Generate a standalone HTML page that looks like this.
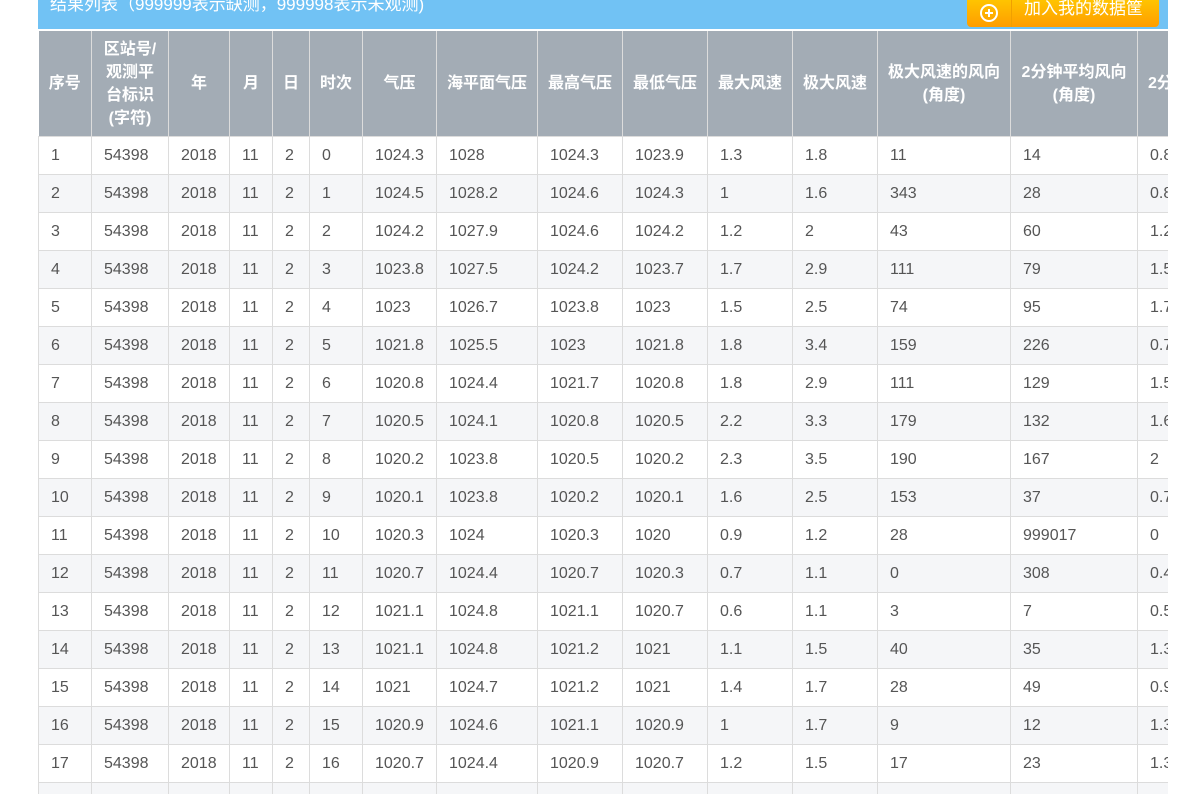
<!DOCTYPE html>
<html><head><meta charset="utf-8"><style>
body{margin:0;background:#fff;font-family:"Liberation Sans","Noto Sans CJK SC",sans-serif;}
.bar{position:absolute;left:38px;top:0;width:1130px;height:29px;background:#71c2f4;}
.bar .t{position:absolute;left:12px;top:-5px;color:#fff;font-size:17px;line-height:20px;}
.btn{position:absolute;left:929px;top:0;width:192px;height:27px;border-radius:0 0 4px 4px;background:linear-gradient(#ffc400,#ff9d00);}
.btn .ic{position:absolute;left:13px;top:4px;width:14px;height:14px;border:2px solid #fff;border-radius:50%;}
.btn .ic:before{content:"";position:absolute;left:3px;top:6px;width:8px;height:2px;background:#fff;}
.btn .ic:after{content:"";position:absolute;left:6px;top:3px;width:2px;height:8px;background:#fff;}
.btn .d{position:absolute;left:44px;top:0;width:1px;height:27px;background:#f0a000;}
.btn .l{position:absolute;left:57px;top:-2px;color:#fff;font-size:17px;line-height:22px;}
.wrap{position:absolute;left:38px;top:31px;width:1130px;height:763px;overflow:hidden;}
table{border-collapse:collapse;table-layout:fixed;width:1200px;}
th{background:#a3acb5;color:#fff;font-weight:bold;font-size:16px;line-height:23px;height:105px;border:1px solid #dcdcdc;border-top:0;padding:0 2px;text-align:center;white-space:nowrap;}
td{height:36px;border:1px solid #dcdcdc;color:#555;font-size:16px;padding:1px 0 0 12px;white-space:nowrap;box-sizing:content-box;}
tr:nth-child(even) td{background:#f5f6f8;}
</style></head><body>
<div class="bar"><div class="t">结果列表（999999表示缺测，999998表示未观测)</div>
<div class="btn"><div class="ic"></div><div class="d"></div><div class="l">加入我的数据筐</div></div></div>
<div class="wrap"><table>
<colgroup><col style="width:53px"><col style="width:77px"><col style="width:61px"><col style="width:43px"><col style="width:37px"><col style="width:53px"><col style="width:74px"><col style="width:101px"><col style="width:85px"><col style="width:85px"><col style="width:85px"><col style="width:85px"><col style="width:133px"><col style="width:127px"><col style="width:101px"></colgroup>
<thead><tr><th style="border-left:0">序号</th><th>区站号/<br>观测平<br>台标识<br>(字符)</th><th>年</th><th>月</th><th>日</th><th>时次</th><th>气压</th><th>海平面气压</th><th>最高气压</th><th>最低气压</th><th>最大风速</th><th>极大风速</th><th>极大风速的风向<br>(角度)</th><th>2分钟平均风向<br>(角度)</th><th style="text-align:left;padding-left:10px">2分钟平均风速</th></tr></thead>
<tbody>
<tr><td>1</td><td>54398</td><td>2018</td><td>11</td><td>2</td><td>0</td><td>1024.3</td><td>1028</td><td>1024.3</td><td>1023.9</td><td>1.3</td><td>1.8</td><td>11</td><td>14</td><td>0.8</td></tr>
<tr><td>2</td><td>54398</td><td>2018</td><td>11</td><td>2</td><td>1</td><td>1024.5</td><td>1028.2</td><td>1024.6</td><td>1024.3</td><td>1</td><td>1.6</td><td>343</td><td>28</td><td>0.8</td></tr>
<tr><td>3</td><td>54398</td><td>2018</td><td>11</td><td>2</td><td>2</td><td>1024.2</td><td>1027.9</td><td>1024.6</td><td>1024.2</td><td>1.2</td><td>2</td><td>43</td><td>60</td><td>1.2</td></tr>
<tr><td>4</td><td>54398</td><td>2018</td><td>11</td><td>2</td><td>3</td><td>1023.8</td><td>1027.5</td><td>1024.2</td><td>1023.7</td><td>1.7</td><td>2.9</td><td>111</td><td>79</td><td>1.5</td></tr>
<tr><td>5</td><td>54398</td><td>2018</td><td>11</td><td>2</td><td>4</td><td>1023</td><td>1026.7</td><td>1023.8</td><td>1023</td><td>1.5</td><td>2.5</td><td>74</td><td>95</td><td>1.7</td></tr>
<tr><td>6</td><td>54398</td><td>2018</td><td>11</td><td>2</td><td>5</td><td>1021.8</td><td>1025.5</td><td>1023</td><td>1021.8</td><td>1.8</td><td>3.4</td><td>159</td><td>226</td><td>0.7</td></tr>
<tr><td>7</td><td>54398</td><td>2018</td><td>11</td><td>2</td><td>6</td><td>1020.8</td><td>1024.4</td><td>1021.7</td><td>1020.8</td><td>1.8</td><td>2.9</td><td>111</td><td>129</td><td>1.5</td></tr>
<tr><td>8</td><td>54398</td><td>2018</td><td>11</td><td>2</td><td>7</td><td>1020.5</td><td>1024.1</td><td>1020.8</td><td>1020.5</td><td>2.2</td><td>3.3</td><td>179</td><td>132</td><td>1.6</td></tr>
<tr><td>9</td><td>54398</td><td>2018</td><td>11</td><td>2</td><td>8</td><td>1020.2</td><td>1023.8</td><td>1020.5</td><td>1020.2</td><td>2.3</td><td>3.5</td><td>190</td><td>167</td><td>2</td></tr>
<tr><td>10</td><td>54398</td><td>2018</td><td>11</td><td>2</td><td>9</td><td>1020.1</td><td>1023.8</td><td>1020.2</td><td>1020.1</td><td>1.6</td><td>2.5</td><td>153</td><td>37</td><td>0.7</td></tr>
<tr><td>11</td><td>54398</td><td>2018</td><td>11</td><td>2</td><td>10</td><td>1020.3</td><td>1024</td><td>1020.3</td><td>1020</td><td>0.9</td><td>1.2</td><td>28</td><td>999017</td><td>0</td></tr>
<tr><td>12</td><td>54398</td><td>2018</td><td>11</td><td>2</td><td>11</td><td>1020.7</td><td>1024.4</td><td>1020.7</td><td>1020.3</td><td>0.7</td><td>1.1</td><td>0</td><td>308</td><td>0.4</td></tr>
<tr><td>13</td><td>54398</td><td>2018</td><td>11</td><td>2</td><td>12</td><td>1021.1</td><td>1024.8</td><td>1021.1</td><td>1020.7</td><td>0.6</td><td>1.1</td><td>3</td><td>7</td><td>0.5</td></tr>
<tr><td>14</td><td>54398</td><td>2018</td><td>11</td><td>2</td><td>13</td><td>1021.1</td><td>1024.8</td><td>1021.2</td><td>1021</td><td>1.1</td><td>1.5</td><td>40</td><td>35</td><td>1.3</td></tr>
<tr><td>15</td><td>54398</td><td>2018</td><td>11</td><td>2</td><td>14</td><td>1021</td><td>1024.7</td><td>1021.2</td><td>1021</td><td>1.4</td><td>1.7</td><td>28</td><td>49</td><td>0.9</td></tr>
<tr><td>16</td><td>54398</td><td>2018</td><td>11</td><td>2</td><td>15</td><td>1020.9</td><td>1024.6</td><td>1021.1</td><td>1020.9</td><td>1</td><td>1.7</td><td>9</td><td>12</td><td>1.3</td></tr>
<tr><td>17</td><td>54398</td><td>2018</td><td>11</td><td>2</td><td>16</td><td>1020.7</td><td>1024.4</td><td>1020.9</td><td>1020.7</td><td>1.2</td><td>1.5</td><td>17</td><td>23</td><td>1.3</td></tr>
<tr><td>18</td><td>54398</td><td>2018</td><td>11</td><td>2</td><td>17</td><td>1020.6</td><td>1024.3</td><td>1020.7</td><td>1020.6</td><td>1.1</td><td>1.5</td><td>20</td><td>30</td><td>1.0</td></tr>
</tbody></table></div>
</body></html>
